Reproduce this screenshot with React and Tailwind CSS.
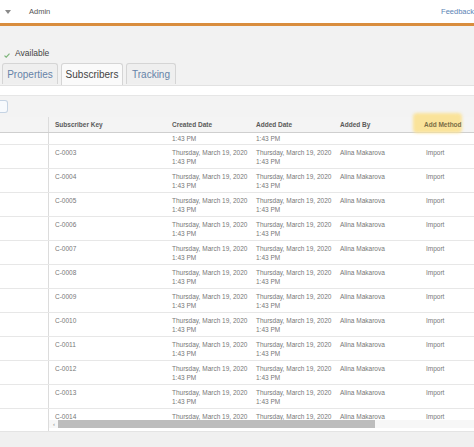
const keys = Array.from({ length: 12 }, (_, i) => `C-${String(i + 3).padStart(4, '0')}`);

const DateCell = ({ w }) => (
  <div className={`${w} shrink-0 pl-[6px] pt-[3px] leading-[9px]`}>
    <div className="whitespace-nowrap">Thursday, March 19, 2020</div>
    <div>1:43 PM</div>
  </div>
);

const Tab = ({ label, active, w }) => (
  <div
    className={`${w} flex items-center justify-center rounded-t-[3px] border border-b-0 border-[#d5d5d5] text-[10px] ${
      active ? 'h-[22px] bg-[#fafafa] text-[#444]' : 'h-[21px] bg-[#efefef] text-[#6683a8] mb-[1px]'
    }`}
  >
    {label}
  </div>
);

export default function App() {
  return (
    <div className="h-[447px] w-[474px] overflow-hidden bg-[#f2f2f2] font-['Liberation_Sans',Arial,sans-serif]">
      {/* top nav */}
      <div className="flex h-[23px] items-center bg-white">
        <svg width="6" height="4" viewBox="0 0 6 4" className="ml-[5px] mt-[1px]">
          <path d="M0 0h6L3 4z" fill="#8a8a8a" />
        </svg>
        <span className="ml-[18px] text-[7.5px] text-[#555]">Admin</span>
        <div className="flex-1" />
        <span className="whitespace-nowrap text-[7.5px] text-[#5b84b5]">Feedback</span>
      </div>
      <div className="h-[3px] bg-[#d98d3e]" />

      {/* status */}
      <div className="flex h-[37px] items-end pb-[3px] pl-[4px]">
        <svg width="6" height="5" viewBox="0 0 6 5" className="mb-[2px]">
          <path d="M0.5 2.6L2.2 4.2L5.5 0.7" fill="none" stroke="#7db57a" strokeWidth="1.2" />
        </svg>
        <span className="ml-[5px] text-[8.5px] text-[#444]">Available</span>
      </div>

      {/* tabs */}
      <div className="flex items-end gap-[3px] pl-[2px]">
        <Tab label="Properties" w="w-[56px]" />
        <Tab label="Subscribers" w="w-[62px]" active />
        <Tab label="Tracking" w="w-[50px]" />
      </div>

      {/* panel */}
      <div className="bg-white">
        <div className="h-[10px] border-t border-[#e2e2e2]" />
        <div className="flex h-[22px] items-center border-t border-[#e6e6e6] bg-[#f3f3f3]">
          <div className="h-[13px] w-[8px] rounded-r-[3px] border border-l-0 border-[#c5d3e3] bg-[#f7fafd]" />
        </div>

        {/* header */}
        <div className="flex h-[16px] border-b border-[#cfcfcf] bg-[#f4f4f4] text-[6.5px] font-bold text-[#5a5a5a]">
          <div className="w-[49px] shrink-0 border-r border-[#dcdcdc]" />
          <div className="flex w-[117px] shrink-0 items-center pl-[6px]">Subscriber Key</div>
          <div className="flex w-[84px] shrink-0 items-center pl-[6px]">Created Date</div>
          <div className="flex w-[84px] shrink-0 items-center pl-[6px]">Added Date</div>
          <div className="flex w-[84px] shrink-0 items-center pl-[6px]">Added By</div>
          <div className="relative flex flex-1 items-center pl-[6px]">
            <span className="absolute left-[-5px] top-[-4px] h-[20px] w-[49px] rounded-[4px] bg-[#fae39a] blur-[1.5px]" />
            <span className="relative text-[#7a6e46]">Add Method</span>
          </div>
        </div>

        {/* rows */}
        <div className="relative h-[298px] overflow-hidden text-[6.5px] text-[#777]">
          <div className="flex h-[12px] border-b border-[#e7e7e7]">
            <div className="w-[49px] shrink-0 border-r border-[#dcdcdc]" />
            <div className="w-[117px] shrink-0" />
            <div className="w-[84px] shrink-0 pl-[6px] leading-[11px]">1:43 PM</div>
            <div className="w-[84px] shrink-0 pl-[6px] leading-[11px]">1:43 PM</div>
          </div>
          {keys.map((k) => (
            <div key={k} className="flex h-[24px] border-b border-[#e7e7e7]">
              <div className="w-[49px] shrink-0 border-r border-[#dcdcdc]" />
              <div className="w-[117px] shrink-0 pl-[6px] pt-[3px] leading-[9px]">{k}</div>
              <DateCell w="w-[84px]" />
              <DateCell w="w-[84px]" />
              <div className="w-[84px] shrink-0 pl-[6px] pt-[3px] leading-[9px]">Alina Makarova</div>
              <div className="flex-1 pl-[8px] pt-[3px] leading-[9px]">Import</div>
            </div>
          ))}

          {/* horizontal scrollbar */}
          <div className="absolute bottom-[3px] left-[49px] right-0 flex h-[8px] items-center bg-[#f7f7f7]">
            <span className="ml-[4px] text-[6px] leading-none text-[#888]">‹</span>
            <div className="ml-[3px] h-[8px] w-[317px] bg-[#bdbdbd]" />
          </div>
        </div>
      </div>

      <div className="h-[16px] border-t border-[#e4e4e4] bg-[#f0f0f0]" />
    </div>
  );
}
